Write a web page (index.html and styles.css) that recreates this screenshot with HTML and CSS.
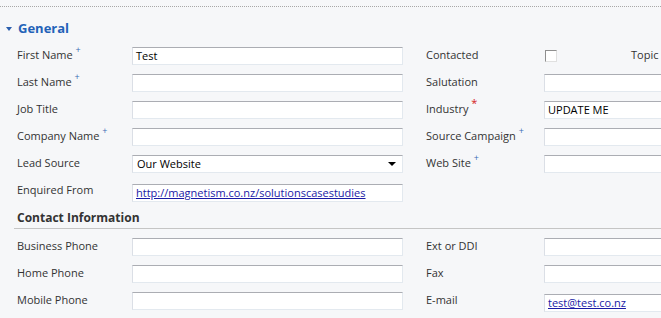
FILE: index.html
```html
<!DOCTYPE html>
<html>
<head>
<meta charset="utf-8">
<link rel="stylesheet" href="styles.css">
</head>
<body>
<div class="page">
  <div class="dots"></div>
  <div class="sec-head">
    <span class="tri"></span><span class="sec-title">General</span>
  </div>
  <div class="grid">
    <div class="lbl">First Name <sup class="rec">+</sup></div>
    <div class="field">Test</div>
    <div class="lbl r">Contacted</div>
    <div class="chkcell"><span class="chk"></span><span class="topic">Topic</span></div>

    <div class="lbl">Last Name <sup class="rec">+</sup></div>
    <div class="field"></div>
    <div class="lbl r">Salutation</div>
    <div class="field"></div>

    <div class="lbl">Job Title</div>
    <div class="field"></div>
    <div class="lbl r">Industry <sup class="req">*</sup></div>
    <div class="field">UPDATE ME</div>

    <div class="lbl">Company Name <sup class="rec">+</sup></div>
    <div class="field"></div>
    <div class="lbl r">Source Campaign <sup class="rec">+</sup></div>
    <div class="field"></div>

    <div class="lbl">Lead Source</div>
    <div class="field select">Our Website<span class="arrow"></span></div>
    <div class="lbl r">Web Site <sup class="rec">+</sup></div>
    <div class="field"></div>

    <div class="lbl">Enquired From</div>
    <div class="field link-field"><a class="lnk">http://magnetism.co.nz/solutionscasestudies</a></div>
  </div>

  <div class="sub-head">Contact Information</div>
  <div class="grid grid2">
    <div class="lbl">Business Phone</div>
    <div class="field"></div>
    <div class="lbl r">Ext or DDI</div>
    <div class="field"></div>

    <div class="lbl">Home Phone</div>
    <div class="field"></div>
    <div class="lbl r">Fax</div>
    <div class="field"></div>

    <div class="lbl">Mobile Phone</div>
    <div class="field"></div>
    <div class="lbl r">E-mail</div>
    <div class="field link-field"><a class="lnk">test@test.co.nz</a></div>
  </div>
</div>
</body>
</html>
```
FILE: styles.css
```css
html, body {
  margin: 0;
  padding: 0;
  background: #f6f7f9;
  overflow: hidden;
}
.page {
  width: 661px;
  height: 318px;
  overflow: hidden;
  font-family: "Open Sans", "Noto Sans", sans-serif;
  font-size: 11px;
  color: #333;
}
.dots {
  margin-top: 6px;
  border-top: 1px dotted #a8a8a8;
  height: 0;
}
.sec-head {
  display: flex;
  align-items: center;
  margin-top: 12px;
  height: 18px;
  padding-left: 6px;
}
.tri {
  width: 0;
  height: 0;
  border-left: 3px solid transparent;
  border-right: 3px solid transparent;
  border-top: 4px solid #2b5fae;
  margin-right: 6px;
  margin-top: 1px;
}
.sec-title {
  font-size: 13px;
  font-weight: bold;
  color: #2362b8;
}
.grid {
  display: grid;
  grid-template-columns: 115px 271px 141px 140px;
  grid-auto-rows: 18px;
  row-gap: 9px;
  padding-left: 17px;
  margin-top: 10px;
  align-items: center;
}
.grid .link-field {
  margin-top: 3px;
}
.lbl {
  white-space: nowrap;
  color: #333;
  line-height: 15px;
  height: 18px;
}
.lbl.r {
  padding-left: 23px;
}
sup {
  font-size: 9px;
  line-height: 0;
  position: relative;
  top: -1px;
  vertical-align: super;
}
.rec { color: #3a6bb5; }
.req { color: #d42020; font-size: 11px; }
.field {
  box-sizing: border-box;
  height: 18px;
  background: #fff;
  border-top: 1px solid #abadb3;
  border-left: 1px solid #dbdfe6;
  border-right: 1px solid #e3e9ef;
  border-bottom: 1px solid #e3e9ef;
  padding-left: 3px;
  line-height: 16px;
  color: #000;
  white-space: nowrap;
  overflow: hidden;
}
.select {
  display: flex;
  justify-content: space-between;
  align-items: center;
  padding-left: 4px;
  padding-right: 6px;
}
.arrow {
  width: 0;
  height: 0;
  border-left: 4px solid transparent;
  border-right: 4px solid transparent;
  border-top: 4px solid #000;
}
.lnk {
  color: #1a1aa6;
  text-decoration: underline;
}
.chkcell {
  display: flex;
  align-items: center;
  height: 18px;
}
.chk {
  box-sizing: border-box;
  width: 12px;
  height: 12px;
  margin-left: 1px;
  background: #fff;
  border-top: 1px solid #8f8f8f;
  border-left: 1px solid #8f8f8f;
  border-right: 1px solid #e0e0e0;
  border-bottom: 1px solid #e0e0e0;
}
.topic {
  margin-left: 74px;
  color: #333;
  line-height: 15px;
  align-self: flex-start;
}
.sub-head {
  margin-top: 8px;
  margin-left: 14px;
  padding-left: 3px;
  font-size: 12px;
  font-weight: bold;
  color: #333;
  height: 20px;
  line-height: 20px;
  border-bottom: 1px solid #c5c5c5;
}
.grid2 {
  margin-top: 9px;
}
```
